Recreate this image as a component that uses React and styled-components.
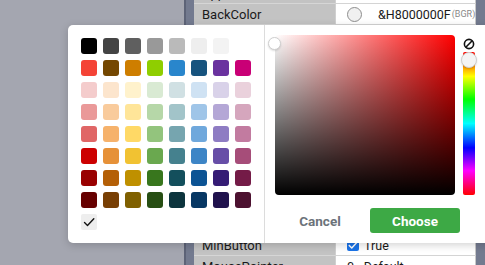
import styled, { createGlobalStyle } from 'styled-components';

const GlobalStyle = createGlobalStyle`
  html, body {
    margin: 0;
    padding: 0;
    overflow: hidden;
    background: #a4a6b0;
  }
  * {
    box-sizing: border-box;
  }
`;

const Screen = styled.div`
  position: relative;
  display: flex;
  width: 485px;
  height: 265px;
  overflow: hidden;
  font-family: Roboto, 'Liberation Sans', sans-serif;
`;

const Backdrop = styled.div`
  width: 184px;
  flex-shrink: 0;
  background: #a4a6b0;
`;

const Inspector = styled.div`
  display: flex;
  flex: 1;
`;

const Strip = styled.div`
  width: 10px;
  flex-shrink: 0;
  background: #737a8f;
  border-left: ${p => (p.$left ? '2px solid #5d6377' : 'none')};
`;

const Grid = styled.div`
  flex: 1;
  margin-top: -17px;
  background: #fff;
`;

const Row = styled.div`
  display: grid;
  grid-template-columns: 141px 1fr;
  height: 21px;
`;

const NameCell = styled.div`
  display: flex;
  align-items: center;
  padding-left: 8px;
  background: #c3c3c3;
  border-bottom: 1px solid #d6d6d6;
  color: #1a1a1a;
  font-size: 13px;
`;

const ValueCell = styled.div`
  display: flex;
  align-items: center;
  padding-left: 11px;
  background: #fff;
  border-bottom: 1px solid #d4d4d4;
  border-left: 1px solid #d0d0d0;
  border-right: 1px solid #c8c8c8;
  color: #1a1a1a;
  font-size: 12.5px;
`;

const ColorDot = styled.span`
  width: 15px;
  height: 15px;
  border-radius: 50%;
  background: #f0f0f0;
  border: 1px solid #8e8e8e;
  margin-right: 16px;
`;

const Hint = styled.span`
  font-size: 9px;
  color: #888;
  margin-left: 1px;
`;

const Tick = styled.span`
  display: flex;
  align-items: center;
  justify-content: center;
  width: 12px;
  height: 12px;
  border-radius: 2px;
  background: #1a73e8;
  margin-right: 5px;
`;

const Popup = styled.div`
  position: absolute;
  left: 68px;
  top: 25px;
  display: flex;
  background: #fff;
  border-radius: 5px;
  box-shadow: 0 2px 8px rgba(0, 0, 0, 0.18);
`;

const PaletteSection = styled.div`
  width: 197px;
  padding: 13px;
  border-right: 1px solid #dcdcdc;
  display: flex;
  flex-direction: column;
  gap: 6px;
`;

const SwatchGrid = styled.div`
  display: grid;
  grid-template-columns: repeat(8, 16px);
  grid-auto-rows: 16px;
  gap: 6px;
`;

const Swatch = styled.div`
  border-radius: 3px;
  background: ${p => p.$color};
`;

const CheckTile = styled.div`
  display: flex;
  align-items: center;
  justify-content: center;
  width: 16px;
  height: 16px;
  border-radius: 2px;
  background: #eeeeee;
`;

const PickerSection = styled.div`
  padding: 10px 18px 10px 10px;
  display: flex;
  flex-direction: column;
`;

const PickerTop = styled.div`
  display: flex;
  gap: 8px;
`;

const SatBox = styled.div`
  position: relative;
  width: 180px;
  height: 160px;
  border-radius: 4px;
  background: linear-gradient(to top, #000, rgba(0, 0, 0, 0)),
    linear-gradient(to right, #fff, #f00);
`;

const Handle = styled.div`
  position: absolute;
  width: ${p => p.$size}px;
  height: ${p => p.$size}px;
  border-radius: 50%;
  background: ${p => p.$fill};
  border: 1px solid #cfcfcf;
  box-shadow: 0 1px 2px rgba(0, 0, 0, 0.15);
`;

const SatHandle = styled(Handle)`
  left: -7px;
  top: 2px;
`;

const HueColumn = styled.div`
  width: 12px;
  display: flex;
  flex-direction: column;
  align-items: center;
  gap: 2px;
  padding-top: 3px;
`;

const HueBar = styled.div`
  position: relative;
  flex: 1;
  width: 12px;
  border-radius: 2px;
  background: linear-gradient(
    to bottom,
    #f00 0%,
    #ff0 17%,
    #0f0 33%,
    #0ff 50%,
    #00f 67%,
    #f0f 83%,
    #f00 100%
  );
`;

const HueHandle = styled(Handle)`
  left: -2px;
  top: 0;
`;

const ButtonRow = styled.div`
  display: flex;
  gap: 5px;
  margin-top: 13px;
`;

const Button = styled.button`
  width: 90px;
  height: 25px;
  border: none;
  border-radius: 3px;
  font-family: Roboto, 'Liberation Sans', sans-serif;
  font-size: 13.5px;
  font-weight: 700;
  padding: 0;
  background: ${p => (p.$primary ? '#3da945' : 'transparent')};
  color: ${p => (p.$primary ? '#fff' : '#6c737a')};
`;

const palette = [
  ['#000000', '#444444', '#5f5f5f', '#999999', '#bababa', '#eeeeee', '#f3f3f3', '#ffffff'],
  ['#f44336', '#744700', '#ce7e00', '#8fce00', '#2986cc', '#16537e', '#6a329f', '#c90076'],
  ['#f4cccc', '#fce5cd', '#fff2cc', '#d9ead3', '#d0e0e3', '#cfe2f3', '#d9d2e9', '#ead1dc'],
  ['#ea9999', '#f9cb9c', '#ffe599', '#b6d7a8', '#a2c4c9', '#9fc5e8', '#b4a7d6', '#d5a6bd'],
  ['#e06666', '#f6b26b', '#ffd966', '#93c47d', '#76a5af', '#6fa8dc', '#8e7cc3', '#c27ba0'],
  ['#cc0000', '#e69138', '#f1c232', '#6aa84f', '#45818e', '#3d85c6', '#674ea7', '#a64d79'],
  ['#990000', '#b45f06', '#bf9000', '#38761d', '#134f5c', '#0b5394', '#351c75', '#741b47'],
  ['#660000', '#783f04', '#7f6000', '#274e13', '#0c343d', '#073763', '#20124d', '#4c1130'],
];

const rows = [
  { name: 'Appearance', value: '1 - 3D' },
  { name: 'BackColor', value: '&H8000000F', kind: 'color' },
  { name: 'BorderStyle', value: '2 - Sizable' },
  { name: 'Caption', value: 'Form1' },
  { name: 'ClipControls', value: 'True', kind: 'bool' },
  { name: 'ControlBox', value: 'True', kind: 'bool' },
  { name: 'DrawMode', value: '13 - Copy Pen' },
  { name: 'Enabled', value: 'True', kind: 'bool' },
  { name: 'FillColor', value: '&H00000000', kind: 'color' },
  { name: 'Font', value: 'MS Sans Serif' },
  { name: 'ForeColor', value: '&H80000012', kind: 'color' },
  { name: 'MaxButton', value: 'True', kind: 'bool' },
  { name: 'MinButton', value: 'True', kind: 'bool' },
  { name: 'MousePointer', value: '0 - Default' },
];

const CheckIcon = ({ size = 12, color = '#111', width = 1.4 }) => (
  <svg width={size} height={size} viewBox="0 0 12 12">
    <polyline
      points="1.5,6.5 4.5,9.5 10.8,2.8"
      fill="none"
      stroke={color}
      strokeWidth={width}
      strokeLinecap="round"
      strokeLinejoin="round"
    />
  </svg>
);

const NoColorIcon = () => (
  <svg width="12" height="12" viewBox="0 0 12 12">
    <circle cx="6" cy="6" r="4.6" fill="none" stroke="#111" strokeWidth="1.6" />
    <line x1="9.2" y1="2.8" x2="2.8" y2="9.2" stroke="#111" strokeWidth="1.6" />
  </svg>
);

const PropertyValue = ({ row }) => {
  if (row.kind === 'color') {
    return (
      <>
        <ColorDot />
        {row.value}
        <Hint>(BGR)</Hint>
      </>
    );
  }
  if (row.kind === 'bool') {
    return (
      <>
        <Tick>
          <CheckIcon size={10} color="#fff" width={1.8} />
        </Tick>
        {row.value}
      </>
    );
  }
  return row.value;
};

const App = () => (
  <Screen>
    <GlobalStyle />
    <Backdrop />
    <Inspector>
      <Strip $left />
      <Grid>
        {rows.map(row => (
          <Row key={row.name}>
            <NameCell>{row.name}</NameCell>
            <ValueCell>
              <PropertyValue row={row} />
            </ValueCell>
          </Row>
        ))}
      </Grid>
      <Strip />
    </Inspector>

    <Popup>
      <PaletteSection>
        <SwatchGrid>
          {palette.flat().map((c, i) => (
            <Swatch key={i} $color={c} />
          ))}
        </SwatchGrid>
        <CheckTile>
          <CheckIcon />
        </CheckTile>
      </PaletteSection>

      <PickerSection>
        <PickerTop>
          <SatBox>
            <SatHandle $size={13} $fill="#ffffff" />
          </SatBox>
          <HueColumn>
            <NoColorIcon />
            <HueBar>
              <HueHandle $size={16} $fill="#f4f4f4" />
            </HueBar>
          </HueColumn>
        </PickerTop>
        <ButtonRow>
          <Button>Cancel</Button>
          <Button $primary>Choose</Button>
        </ButtonRow>
      </PickerSection>
    </Popup>
  </Screen>
);

export default App;
